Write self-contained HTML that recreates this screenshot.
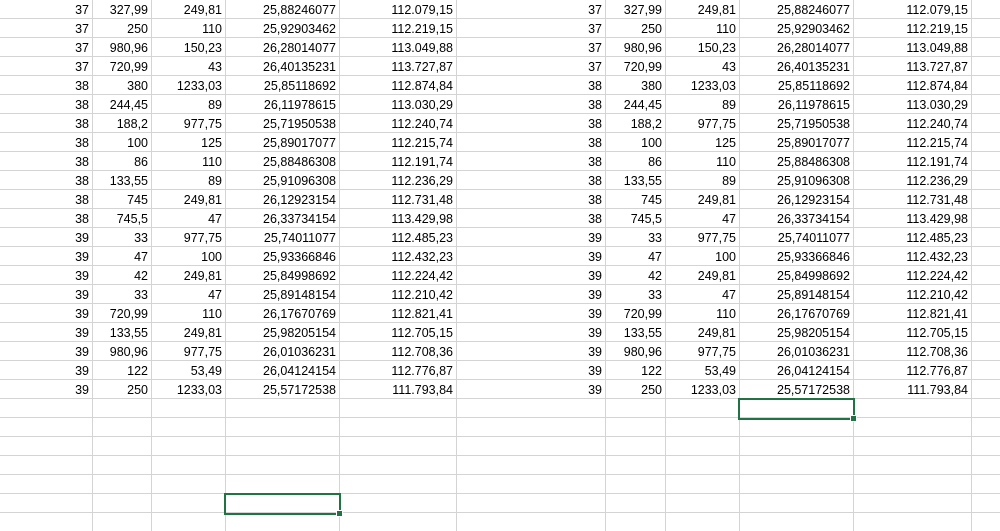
<!DOCTYPE html><html><head><style>
body{margin:0;width:1000px;height:531px;overflow:hidden;background:#fff;position:relative;font-family:"Liberation Sans",sans-serif;font-size:12.5px;color:#000}
.s{position:absolute;top:0;height:531px;overflow:hidden}
.r{position:absolute;left:0;height:19px;border-bottom:1px solid #d4d4d4;box-sizing:border-box;width:100%}
.c{position:absolute;top:0;height:531px;border-left:1px solid #d4d4d4}
.t{position:absolute;text-align:right;line-height:20px;height:19px;white-space:nowrap}
.sel{position:absolute;border:2px solid #217346;box-sizing:border-box}
.sel i{position:absolute;right:-4px;bottom:-4px;width:5px;height:5px;background:#217346;border:1px solid #fff}
</style></head><body>
<div id="L" class="s" style="left:0;width:511px"></div>
<div id="R" class="s" style="left:511px;width:489px"></div>
<div class="sel" style="left:224px;top:493px;width:117px;height:22px"><i></i></div>
<div class="sel" style="left:738px;top:398px;width:117px;height:22px"><i></i></div>
<script>
var d=[["37","327,99","249,81","25,88246077","112.079,15"],["37","250","110","25,92903462","112.219,15"],["37","980,96","150,23","26,28014077","113.049,88"],["37","720,99","43","26,40135231","113.727,87"],["38","380","1233,03","25,85118692","112.874,84"],["38","244,45","89","26,11978615","113.030,29"],["38","188,2","977,75","25,71950538","112.240,74"],["38","100","125","25,89017077","112.215,74"],["38","86","110","25,88486308","112.191,74"],["38","133,55","89","25,91096308","112.236,29"],["38","745","249,81","26,12923154","112.731,48"],["38","745,5","47","26,33734154","113.429,98"],["39","33","977,75","25,74011077","112.485,23"],["39","47","100","25,93366846","112.432,23"],["39","42","249,81","25,84998692","112.224,42"],["39","33","47","25,89148154","112.210,42"],["39","720,99","110","26,17670769","112.821,41"],["39","133,55","249,81","25,98205154","112.705,15"],["39","980,96","977,75","26,01036231","112.708,36"],["39","122","53,49","26,04124154","112.776,87"],["39","250","1233,03","25,57172538","111.793,84"]];
function build(el,cols){var h="";for(var k=0;k<28;k++)h+='<div class="r" style="top:'+(k*19)+'px"></div>';
cols.forEach(function(x){h+='<div class="c" style="left:'+x+'px"></div>'});
d.forEach(function(row,i){row.forEach(function(v,j){h+='<div class="t" style="right:'+(el.offsetWidth-cols[j]+3)+'px;top:'+(i*19)+'px">'+v+'</div>'})});
el.innerHTML=h;}
build(document.getElementById('L'),[92,151,225,339,456]);
build(document.getElementById('R'),[94,154,228,342,460]);
</script>
</body></html>
